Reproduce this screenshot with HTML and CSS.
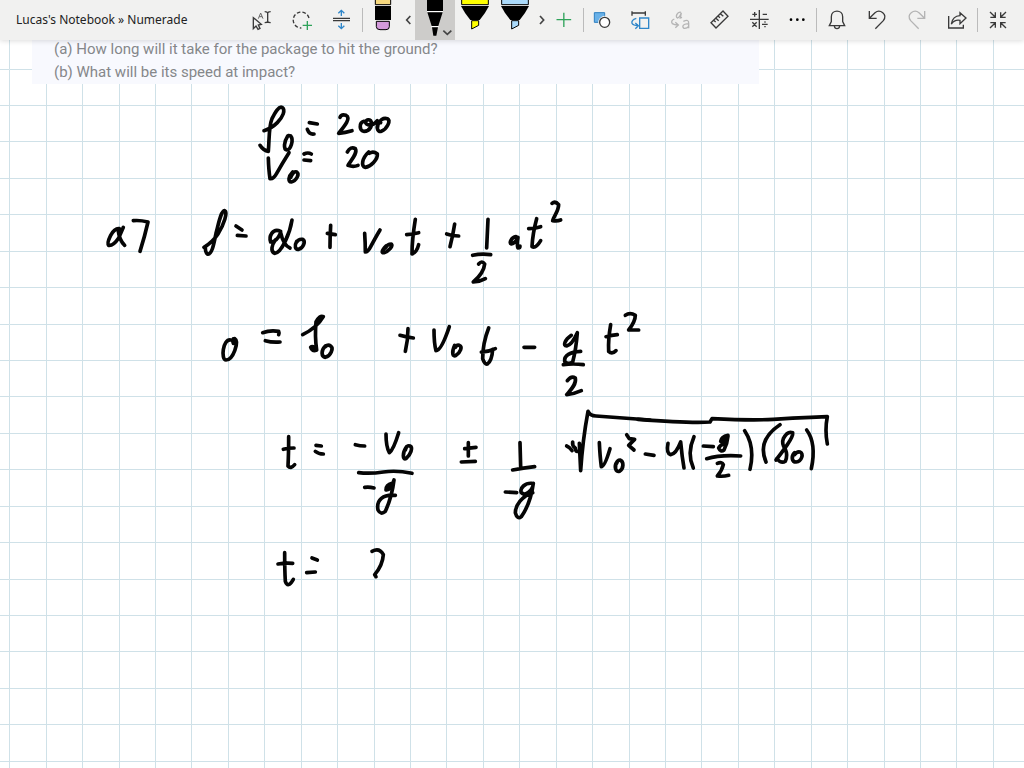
FILE: index.html
```html
<!DOCTYPE html>
<html lang="en">
<head>
<meta charset="utf-8">
<meta name="viewport" content="width=device-width, initial-scale=1">
<title>Lucas's Notebook » Numerade</title>
<link rel="stylesheet" href="styles.css">
</head>
<body>
<header class="toolbar">
  <h1 class="title">Lucas's Notebook » Numerade</h1>
  <div class="group">
    <button class="tool" aria-label="Select or type"><svg viewBox="6 0 120 120"><path class="line" d="M40 53V86L48 78L54 88L60 85L55 75L64 73Z"/><path class="line thin grey" d="M55 56L62 39L69 56M58 50H66"/><path class="line" d="M74 35Q82 35 83 39Q84 35 92 35M83 39V64M74 68Q82 68 83 64Q84 68 92 68"/></svg></button>
    <button class="tool" aria-label="Lasso select"><svg viewBox="126 0 120 120"><path class="line dash" d="M207 54A24 24 0 1 0 184 84"/><path class="line green" d="M202 63V90M188 76H216"/></svg></button>
    <button class="tool" aria-label="Insert space"><svg viewBox="246 0 120 120"><path class="line" d="M279 55H330M279 62H330"/><path class="line blue" d="M304 48V32M295 40L304 31L313 40M304 69V85M295 77L304 86L313 77"/></svg></button>
  </div>
  <span class="sep"></span>
  <div class="group">
    <button class="tool" aria-label="Eraser"><svg viewBox="9 0 120 120"><path fill="#f7d97f" stroke="#000" stroke-width="3" d="M46-4H92V14H46Z"/><path d="M45 18H93V60H45Z"/><path fill="#d39adb" stroke="#000" stroke-width="3" d="M49 64H88V80Q88 89 78 89H60Q49 89 49 80Z"/></svg></button>
    <button class="tool nudge" aria-label="Previous pens"><svg viewBox="129 0 36 120"><path class="line bold" d="M151 48L140 60L151 72"/></svg></button>
    <button class="tool active" aria-label="Black pen" aria-pressed="true"><svg viewBox="165 0 120 120"><path d="M201 0H249V33H201Z"/><path fill="#fff" d="M201 33H249V37H201ZM214 78H236V82H214Z"/><path d="M202 37H248L235 78H215ZM216 82H234L229 107H220Z"/><path class="line bold" d="M250 92L262 103L274 92"/></svg></button>
    <button class="tool" aria-label="Yellow highlighter"><svg viewBox="285 0 120 120"><path fill="#ff0" stroke="#000" stroke-width="3" d="M305-4H385V14H305Z"/><path d="M303 18H387Q376 40 359 60H331Q314 40 303 18Z"/><path fill="#ff0" stroke="#000" stroke-width="3" d="M335 62H356V76L335 87Z"/></svg></button>
    <button class="tool" aria-label="Blue highlighter"><svg viewBox="405 0 120 120"><path fill="#abdafa" stroke="#000" stroke-width="3" d="M425-4H505V14H425Z"/><path d="M423 18H507Q496 40 479 60H451Q434 40 423 18Z"/><path fill="#abdafa" stroke="#000" stroke-width="3" d="M455 62H476V76L455 87Z"/></svg></button>
    <button class="tool nudge" aria-label="More pens"><svg viewBox="525 0 36 120"><path class="line bold" d="M540 48L551 60L540 72"/></svg></button>
    <button class="tool add" aria-label="Add pen"><svg viewBox="564 0 96 120"><path class="line green" d="M613 38V81M591 59H635"/></svg></button>
  </div>
  <span class="sep spaced"></span>
  <div class="group narrow">
    <button class="tool" aria-label="Shapes"><svg viewBox="39 0 114 120"><path fill="#69b1e8" stroke="#2d7fc1" stroke-width="3" d="M58 38H89V67H58Z"/><circle cx="89" cy="67" r="18" fill="#f1f1f0" stroke="#f1f1f0" stroke-width="3"/><circle class="line" cx="89" cy="67" r="15"/></svg></button>
    <button class="tool" aria-label="Ink to shape"><svg viewBox="153 0 114 120"><path class="line" d="M171 39H211M171 34V47M211 34V47"/><path class="line blue" d="M194 54H221V85H194Z"/><path class="line blue" d="M184 55Q168 60 171 70Q174 77 190 77M181 69L190 77L181 86"/></svg></button>
    <button class="tool" aria-label="Ink to text" disabled><svg viewBox="267 0 114 120"><path class="line faint" d="M318 37C307 34 300 51 307 54Q314 52 319 38L316 54L321 52M325 64Q342 56 341 70V85M341 72C326 69 319 80 327 85Q336 86 341 79M298 57Q286 62 292 71Q298 75 309 75M301 67L310 75L301 83"/></svg></button>
    <button class="tool" aria-label="Ruler"><svg viewBox="381 0 114 120"><path class="line" d="M408 68L444 33L459 49L423 84ZM416 61L422 66M422 54L431 62M429 48L435 53M436 41L445 49"/></svg></button>
    <button class="tool" aria-label="Math"><svg viewBox="495 0 114 120"><path class="line" d="M553 30V87M525 58H581M539 36V50M532 43H546M563 43H576M532 67L545 80M545 67L532 80M561 73H578"/><circle cx="570" cy="66" r="2"/><circle cx="570" cy="80" r="2"/></svg></button>
    <button class="tool" aria-label="More options"><svg viewBox="609 0 114 120"><circle cx="648" cy="59" r="4"/><circle cx="667" cy="59" r="4"/><circle cx="685" cy="59" r="4"/></svg></button>
  </div>
  <span class="sep"></span>
  <div class="group">
    <button class="tool" aria-label="Notifications"><svg viewBox="51 0 120 120"><path class="line" d="M88 77L94 65V50C94 28 128 28 128 50V65L134 77ZM103 78Q104 86 111 86Q118 86 119 78"/></svg></button>
    <button class="tool" aria-label="Undo"><svg viewBox="171 0 120 120"><path class="line" d="M208 33V55H230M209 54L225 38C240 26 264 43 250 62L226 86"/></svg></button>
    <button class="tool" aria-label="Redo" disabled><svg viewBox="291 0 120 120"><path class="line faint" d="M374 33V55H352M373 54L357 38C342 26 318 43 332 62L356 86"/></svg></button>
    <button class="tool" aria-label="Share"><svg viewBox="411 0 120 120"><path class="line" d="M446 48V84H490V74M480 38L498 54L480 71V61Q464 58 454 72Q458 48 480 47Z"/></svg></button>
  </div>
  <span class="sep"></span>
  <div class="group">
    <button class="tool" aria-label="Exit full screen"><svg viewBox="534 0 120 120"><path class="line" d="M570 36L586 52M586 37V52H571M618 36L602 52M602 37V52H617M570 84L586 68M586 83V68H571M618 84L602 68M602 83V68H617"/></svg></button>
  </div>
</header>
<main class="page">
  <svg class="grid" aria-hidden="true">
    <defs>
      <pattern id="rules" x="9" y="29" width="255" height="255" patternUnits="userSpaceOnUse">
        <path class="rule" d="M0 0V255M37 0V255M73 0V255M110 0V255M146 0V255M182 0V255M219 0V255M0 0H255M0 36H255M0 72H255M0 109H255M0 145H255M0 182H255M0 218H255" transform="translate(.5 .5)"/>
      </pattern>
    </defs>
    <rect width="100%" height="100%" fill="url(#rules)"/>
  </svg>
  <section class="question">
    <p>(a) How long will it take for the package to hit the ground?</p>
    <p>(b) What will be its speed at impact?</p>
  </section>
  <svg class="ink" viewBox="0 40 1024 728" role="img" aria-label="Handwritten solution of the projectile equation for t">
    <g transform="translate(90 90) scale(.33333)">
      <path d="M522 122Q545 115 562 98C578 82 588 60 576 52C566 48 556 66 546 86C536 110 538 150 535 184Q520 182 510 166"/>
      <path d="M592 140C582 155 580 178 590 180C602 180 612 150 602 138Q594 134 592 140"/>
      <path d="M658 98L682 102M652 118Q658 134 672 132"/>
      <path d="M750 82Q754 72 768 76C784 84 764 108 746 130Q766 128 786 122"/>
      <path d="M822 94C806 98 808 124 822 124C840 124 850 104 842 92C832 84 818 98 834 104Q850 108 862 92M870 94C856 108 862 128 874 124C890 118 904 92 892 86C880 82 866 92 872 98"/>
      <path d="M535 204Q536 240 540 266Q550 268 560 250Q578 218 597 188"/>
      <path d="M608 246C594 260 594 276 604 276C618 274 630 252 620 246Q612 242 602 262"/>
      <path d="M642 192Q654 186 664 192M642 210L662 212"/>
      <path d="M772 186Q782 168 796 176C804 190 782 212 774 226Q790 232 804 226M836 186C816 204 812 230 826 232C842 230 864 208 862 192Q850 182 838 190"/>
      <path d="M88 416Q74 414 62 436Q50 460 56 466Q70 468 86 444L100 412M84 418Q88 452 104 466M130 392Q150 390 174 396Q164 440 150 484"/>
      <path d="M342 472Q368 456 384 432C402 404 414 366 404 362C392 364 386 400 378 430C372 460 366 496 352 492Q346 488 346 472"/>
      <path d="M438 408L456 420M442 436L468 438"/>
      <path d="M606 390C600 430 574 490 554 490C540 484 546 464 556 450M572 424C548 412 536 440 542 456Q560 456 572 428Q580 466 600 474"/>
      <path d="M620 454C612 468 616 480 626 478C640 474 648 454 638 448Q626 446 620 456"/>
      <path d="M722 406Q720 440 720 472M712 430L736 434"/>
    </g>
    <g transform="translate(350 180) scale(.33333)">
      <path d="M44 160Q46 190 46 216Q54 216 62 200Q78 170 90 150M108 198C94 212 94 220 102 218C116 214 130 198 124 192Q112 192 106 204"/>
      <path d="M196 118Q186 180 186 222Q200 218 206 194M170 164Q188 162 206 158"/>
      <path d="M314 132Q308 170 300 200M290 162Q306 168 326 168"/>
      <path d="M414 118L410 204M368 226Q394 220 422 224M386 252Q396 240 404 252C402 274 384 294 370 306Q388 306 406 296"/>
      <path d="M498 170C484 172 476 190 484 192Q496 190 504 172Q500 194 504 204Q510 204 510 198"/>
      <path d="M560 116Q548 160 546 200Q558 206 572 182M536 146Q554 146 572 140M606 70Q616 62 626 74C626 92 612 108 608 122Q622 124 632 120"/>
    </g>
    <g transform="translate(200 300) scale(.33333)">
      <path d="M92 120C68 116 62 180 78 180C100 180 118 124 104 116Q94 116 100 130"/>
      <path d="M188 98Q210 90 236 94Q238 98 236 104M196 122Q216 128 240 126"/>
      <path d="M308 104Q350 84 370 50Q360 44 348 66Q344 110 350 150Q336 156 332 142Q336 138 344 142M350 66L366 54"/>
      <path d="M376 138C362 152 364 170 376 172C392 168 402 144 392 138Q384 132 376 140"/>
      <path d="M624 86Q624 120 616 154M600 106Q620 112 640 114"/>
    </g>
    <g transform="translate(420 290) scale(.33333)">
      <path d="M42 120Q42 160 48 182Q64 182 88 110M104 166C94 188 98 202 108 196C122 186 128 170 118 166Q110 164 106 172"/>
      <path d="M206 114Q188 160 188 206Q194 224 202 222Q216 212 218 178M184 186Q204 186 226 176M312 172L344 172"/>
      <path d="M454 136C434 150 428 168 440 168Q456 164 472 128Q468 180 458 216Q444 226 434 214C432 196 450 186 482 184M430 224Q460 220 490 224"/>
      <path d="M442 272Q454 256 466 264C470 284 450 302 440 314Q462 312 484 302"/>
      <path d="M572 104Q564 150 566 184Q576 194 588 182M558 140Q576 136 592 134M616 76Q630 66 646 76C646 94 634 110 626 120Q640 120 656 120"/>
    </g>
    <g transform="translate(260 400) scale(.33333)">
      <path d="M86 110Q86 160 84 198Q92 208 104 194M70 148Q84 144 102 144M168 136L184 138M166 154Q176 162 190 162"/>
      <path d="M286 134Q300 138 314 138M378 102Q378 140 388 158Q400 150 416 98M440 140C426 160 428 180 438 176C452 164 460 142 450 138Q440 134 436 150"/>
      <path d="M296 218Q330 222 370 216T456 220M314 262Q328 260 342 264"/>
      <path d="M396 250Q378 254 378 270Q392 272 402 240Q396 290 376 334Q362 346 354 330C348 300 370 282 406 286M384 264L398 252"/>
      <path d="M74 458Q74 510 76 544Q84 566 100 538M54 492Q76 488 98 490M156 474L172 480M140 518L166 516"/>
      <path d="M336 454Q358 442 370 464Q368 496 344 524L348 530"/>
    </g>
    <g transform="translate(440 400) scale(.33333)">
      <path d="M85 128V168M74 146L108 142M64 186L106 184"/>
      <path d="M240 128L242 200M218 210Q250 204 284 200M196 276L230 278"/>
      <path d="M276 250C256 248 238 264 244 278C256 290 278 272 280 250Q272 310 244 350Q232 360 226 338C226 316 246 288 278 278"/>
      <path d="M380 138Q390 142 396 152M398 126Q396 138 406 144Q406 156 414 154M418 130L422 212Q428 120 444 34Q450 48 468 48L630 60"/>
      <path d="M478 128Q480 170 484 200Q494 200 510 146M532 184C520 200 528 218 538 214C552 206 552 184 540 180Q532 180 530 190"/>
      <path d="M560 104L568 116L584 118L566 136L582 150"/>
    </g>
    <g transform="translate(640 400) scale(.33333)">
      <path d="M-6 58Q150 70 210 66L216 56Q340 62 400 58Q460 54 512 52L562 50Q554 90 562 132"/>
      <path d="M16 162L42 166M84 130Q78 160 92 164Q108 162 122 126Q126 170 132 204M162 110Q140 160 160 204"/>
      <path d="M190 138L220 140M264 106Q244 110 242 124Q252 130 264 108Q262 130 252 150Q242 158 236 144Q240 134 254 132M200 176Q240 164 302 168"/>
      <path d="M232 190Q246 184 250 194Q246 212 232 228Q250 230 266 226"/>
      <path d="M314 92Q346 140 330 208M420 74Q350 120 378 186"/>
      <path d="M408 180Q424 160 442 134Q460 108 458 98Q442 92 430 116Q424 130 436 148Q444 166 436 184Q424 192 410 176"/>
      <path d="M464 158C452 170 456 186 468 186C486 184 492 160 480 156Q470 154 464 164M500 90Q530 130 514 206"/>
    </g>
  </svg>
</main>
</body>
</html>
```
FILE: styles.css
```css
* { box-sizing: border-box; }

body {
  margin: 0;
  min-height: 100vh;
  display: flex;
  flex-direction: column;
  background: #fff;
  font-family: Roboto, "Liberation Sans", sans-serif;
}

.toolbar {
  position: relative;
  z-index: 1;
  display: flex;
  align-items: center;
  height: 40px;
  padding: 0 6px 0 16px;
  background: #f1f1f0;
  box-shadow: 0 1px 5px rgba(0, 0, 0, 0.14);
}

.title {
  flex: 1;
  min-width: 0;
  margin: 0;
  overflow: hidden;
  white-space: nowrap;
  font: 400 12px/20px "Noto Sans", "Open Sans", sans-serif;
  color: #222;
}

.group { display: flex; flex: none; }

.tool {
  width: 40px;
  height: 40px;
  padding: 0;
  border: 0;
  background: none;
}
.tool svg { display: block; width: 100%; height: 40px; }
.narrow .tool { width: 38px; }
.tool.nudge { width: 12px; }
.tool.add { width: 33px; }
.tool.active { background: #cdccca; }

.sep { flex: none; width: 1px; height: 24px; background: #bbb; }
.sep.spaced { margin: 0 4px 0 3px; }

.line { fill: none; stroke: #3a3a3a; stroke-width: 4; }
circle.line { fill: #fff; }
.thin { stroke-width: 3; }
.bold { stroke: #444; stroke-width: 5; }
.grey { stroke: #666; }
.dash { stroke-dasharray: 11 6; }
.green { stroke: #2fa35a; }
.blue { stroke: #2f86c9; }
.faint { stroke: #b4b4b4; }

.page { position: relative; flex: 1; overflow: hidden; }

.grid { position: absolute; inset: 0; width: 100%; height: 100%; }
.rule { fill: none; stroke: #cfe1e8; stroke-width: 1; }

.question {
  position: relative;
  display: grid;
  gap: 5px;
  width: 71%;
  margin-left: 32px;
  padding: 0 22px 3px;
  background: #f8f9fe;
  color: #85878a;
  font-size: 15px;
  line-height: 18px;
}
.question p { margin: 0; }

.ink {
  position: absolute;
  top: 0;
  left: 0;
  width: 1024px;
  height: 728px;
  fill: none;
  stroke: #050505;
  stroke-width: 11;
  stroke-linecap: round;
  stroke-linejoin: round;
}
```
